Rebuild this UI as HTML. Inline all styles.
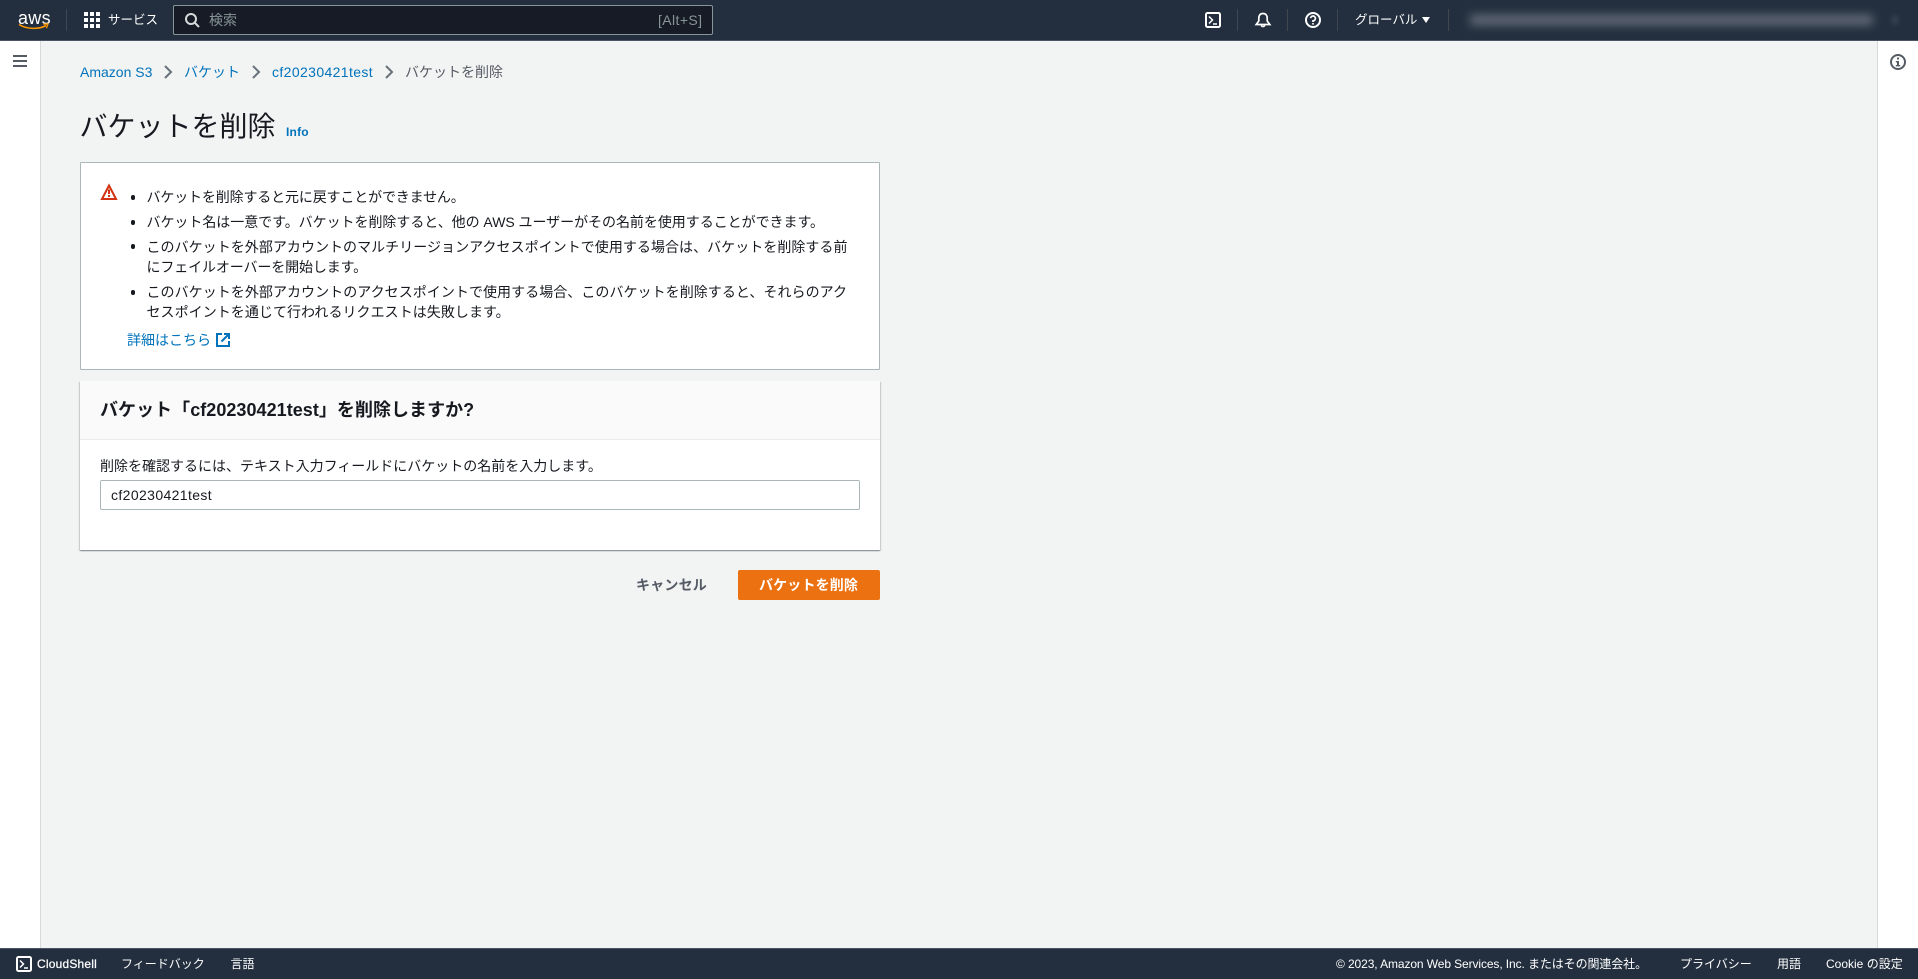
<!DOCTYPE html>
<html lang="ja"><head><meta charset="utf-8"><title>バケットを削除</title>
<style>
html,body{margin:0;padding:0;width:1918px;height:979px;overflow:hidden;background:#f2f3f3}
body{position:relative;font-family:"Liberation Sans","Noto Sans CJK JP",sans-serif;font-size:14px;color:#16191f}
.a{position:absolute}
.t{position:absolute;white-space:nowrap;line-height:20px;height:20px}
.w{color:#fff}
.l{color:#0073bb}
.f{font-size:12px;color:#fff}
.sep{position:absolute;top:9px;width:1px;height:22px;background:#414750}
svg{position:absolute;overflow:visible}
.bl{position:absolute;left:130.500px;width:4.500px;height:4.500px;border-radius:50%;background:#16191f}
</style></head><body>
<!-- header -->
<div class="a" style="left:0;top:0;width:1918px;height:40px;background:#232f3e;border-bottom:1px solid #4a5464"></div>
<div class="t w" style="left:18px;top:7px;font-size:18px;letter-spacing:.3px;line-height:22px">aws</div>
<svg style="left:18px;top:23px" width="32" height="8" viewBox="0 0 32 8"><path d="M1 1.500C9 6.500 21 6.500 28 2.500" fill="none" stroke="#f90" stroke-width="1.600"/><path d="M25.500 1.200L30 1l-1.600 4.200" fill="none" stroke="#f90" stroke-width="1.300"/></svg>
<div class="sep" style="left:66px"></div>
<svg style="left:84px;top:12px" width="16" height="16" fill="#fff"><rect width="4" height="4"/><rect x="6" width="4" height="4"/><rect x="12" width="4" height="4"/><rect y="6" width="4" height="4"/><rect x="6" y="6" width="4" height="4"/><rect x="12" y="6" width="4" height="4"/><rect y="12" width="4" height="4"/><rect x="6" y="12" width="4" height="4"/><rect x="12" y="12" width="4" height="4"/></svg>
<div class="t w" style="left:108px;top:10px;font-size:12.500px">サービス</div>
<div class="a" style="left:173px;top:5px;width:538px;height:28px;background:#161b26;border:1px solid #879596;border-radius:2px"></div>
<svg style="left:185px;top:13px" width="15" height="15" fill="none" stroke="#d5dbdb" stroke-width="2"><circle cx="6" cy="6" r="5"/><path d="M9.600 9.600L14 14"/></svg>
<div class="t" style="left:209px;top:10px;color:#879596">検索</div>
<div class="t" style="left:658px;top:10px;color:#879596;font-size:14px;letter-spacing:.4px">[Alt+S]</div>
<svg style="left:1205px;top:12px" width="16" height="16" fill="none" stroke="#fff" stroke-width="2"><rect x="1" y="1" width="14" height="14" rx="1.500"/><path d="M4 4.500L7.500 8 4 11.500M8 12h4" stroke-width="1.500"/></svg>
<div class="sep" style="left:1237px"></div>
<svg style="left:1255px;top:12px" width="16" height="16" fill="none" stroke="#fff" stroke-width="1.700"><path d="M8 1.500C5.200 1.500 3.800 3.500 3.800 6V9L1.200 12.500H14.800L12.200 9V6C12.200 3.500 10.800 1.500 8 1.500z"/><path d="M6.200 13.200a1.900 1.900 0 0 0 3.600 0" stroke-width="1.500"/></svg>
<div class="sep" style="left:1287px"></div>
<svg style="left:1305px;top:12px" width="16" height="16" fill="none" stroke="#fff" stroke-width="2"><circle cx="8" cy="8" r="7"/><path d="M5.600 6.200A2.400 2.400 0 1 1 8 8.800V10" stroke-width="1.700"/><rect x="7.200" y="11" width="1.600" height="1.600" fill="#fff" stroke="none"/></svg>
<div class="sep" style="left:1337px"></div>
<div class="t w" style="left:1355px;top:10px;font-size:12.500px">グローバル</div>
<svg style="left:1422px;top:17px" width="8" height="6"><path d="M0 0h8L4 6z" fill="#fff"/></svg>
<div class="sep" style="left:1448px"></div>
<div class="a" style="left:1470px;top:15px;width:403px;height:10px;background:#6a7280;filter:blur(5px);opacity:.95"></div>
<div class="a" style="left:1893px;top:16px;width:4px;height:8px;background:#687180;filter:blur(3px);opacity:.5"></div>

<!-- side panels -->
<div class="a" style="left:0;top:41px;width:40px;height:907px;background:#fff;border-right:1px solid #d5dbdb"></div>
<svg style="left:13px;top:55px" width="14" height="12" fill="#545b64"><rect width="14" height="2"/><rect y="5" width="14" height="2"/><rect y="10" width="14" height="2"/></svg>
<div class="a" style="left:1877px;top:41px;width:41px;height:907px;background:#fff;border-left:1px solid #d5dbdb;box-sizing:border-box"></div>
<svg style="left:1890px;top:54px" width="16" height="16"><circle cx="8" cy="8" r="7" fill="none" stroke="#545b64" stroke-width="2"/><rect x="7" y="3.500" width="2" height="2" fill="#545b64"/><path d="M5.800 7h3.200v4h1.200v1.400H5.800V11H7V8.400H5.800z" fill="#545b64"/></svg>

<!-- breadcrumb -->
<div class="t l" style="left:80px;top:62px">Amazon S3</div>
<svg style="left:164px;top:65px" width="9" height="14" fill="none" stroke="#687078" stroke-width="2"><path d="M1 1l6 6-6 6"/></svg>
<div class="t l" style="left:184px;top:62px">バケット</div>
<svg style="left:252px;top:65px" width="9" height="14" fill="none" stroke="#687078" stroke-width="2"><path d="M1 1l6 6-6 6"/></svg>
<div class="t l" style="left:272px;top:62px;letter-spacing:.38px">cf20230421test</div>
<svg style="left:385px;top:65px" width="9" height="14" fill="none" stroke="#687078" stroke-width="2"><path d="M1 1l6 6-6 6"/></svg>
<div class="t" style="left:405px;top:62px;color:#545b64">バケットを削除</div>

<div class="t" style="left:79.500px;top:107px;font-size:28px;line-height:40px;height:40px">バケットを削除</div>
<div class="t l" style="left:286px;top:122px;font-size:12px;font-weight:bold;letter-spacing:.2px">Info</div>

<!-- warning box -->
<div class="a" style="left:80px;top:162px;width:798px;height:206px;background:#fff;border:1px solid #aab7b8;border-radius:1px"></div>
<svg style="left:101px;top:184px" width="16" height="16"><path d="M8 1.500L15 15H1z" fill="none" stroke="#d13212" stroke-width="2"/><rect x="7" y="5.500" width="2" height="4.500" fill="#d13212"/><rect x="7" y="11" width="2" height="2" fill="#d13212"/></svg>
<div class="bl" style="top:195px"></div>
<div class="t" style="left:146.500px;top:187px;letter-spacing:-.15px">バケットを削除すると元に戻すことができません。</div>
<div class="bl" style="top:220px"></div>
<div class="t" style="left:146.500px;top:212px;letter-spacing:-.04px">バケット名は一意です。バケットを削除すると、他の AWS ユーザーがその名前を使用することができます。</div>
<div class="bl" style="top:244px"></div>
<div class="t" style="left:146.500px;top:237px;letter-spacing:.04px">このバケットを外部アカウントのマルチリージョンアクセスポイントで使用する場合は、バケットを削除する前</div>
<div class="t" style="left:146.500px;top:257px;letter-spacing:-.12px">にフェイルオーバーを開始します。</div>
<div class="bl" style="top:290px"></div>
<div class="t" style="left:146.500px;top:282px;letter-spacing:.05px">このバケットを外部アカウントのアクセスポイントで使用する場合、このバケットを削除すると、それらのアク</div>
<div class="t" style="left:146.500px;top:302px;letter-spacing:.05px">セスポイントを通じて行われるリクエストは失敗します。</div>
<div class="t l" style="left:127px;top:330px">詳細はこちら</div>
<svg style="left:216px;top:333px" width="14" height="14" fill="none" stroke="#0073bb" stroke-width="2"><path d="M6 1H1v12h12V8"/><path d="M5.500 8.500L12.500 1.500M8 1h5v5"/></svg>

<!-- card -->
<div class="a" style="left:80px;top:381px;width:800px;height:169px;background:#fff;box-shadow:0 1px 1px 0 rgba(0,28,36,.3),1px 1px 1px 0 rgba(0,28,36,.15),-1px 1px 1px 0 rgba(0,28,36,.15)"></div>
<div class="a" style="left:80px;top:381px;width:800px;height:58px;background:#fafafa;border-bottom:1px solid #eaeded"></div>
<div class="t" style="left:100px;top:398px;font-size:18px;font-weight:bold;line-height:24px;height:24px;letter-spacing:.04px">バケット「cf20230421test」を削除しますか?</div>
<div class="t" style="left:100px;top:456px">削除を確認するには、テキスト入力フィールドにバケットの名前を入力します。</div>
<div class="a" style="left:100px;top:480px;width:758px;height:28px;background:#fff;border:1px solid #aab7b8;border-radius:2px"></div>
<div class="t" style="left:111px;top:485px;letter-spacing:.38px">cf20230421test</div>

<div class="t" style="left:636px;top:575px;color:#545b64;font-weight:bold;letter-spacing:.2px">キャンセル</div>
<div class="a" style="left:738px;top:570px;width:142px;height:30px;background:#ec7211;border-radius:2px"></div>
<div class="t w" style="left:759px;top:575px;font-weight:bold;letter-spacing:.15px">バケットを削除</div>

<!-- footer -->
<div class="a" style="left:0;top:948px;width:1918px;height:31px;background:#232f3e;border-top:1px solid #4a5464;box-sizing:border-box"></div>
<svg style="left:16px;top:956px" width="16" height="16" fill="none" stroke="#fff" stroke-width="2"><rect x="1" y="1" width="14" height="14" rx="1.500"/><path d="M4 4.500L7.500 8 4 11.500M8 12h4" stroke-width="1.500"/></svg>
<div class="t f" style="left:37px;top:954px;letter-spacing:.2px;-webkit-text-stroke:.25px #fff">CloudShell</div>
<div class="t f" style="left:121px;top:954px">フィードバック</div>
<div class="t f" style="left:230.500px;top:954px">言語</div>
<div class="t f" style="left:1336px;top:954px;letter-spacing:-.1px">© 2023, Amazon Web Services, Inc. またはその関連会社。</div>
<div class="t f" style="left:1680px;top:954px">プライバシー</div>
<div class="t f" style="left:1777px;top:954px">用語</div>
<div class="t f" style="left:1826px;top:954px">Cookie の設定</div>
</body></html>
